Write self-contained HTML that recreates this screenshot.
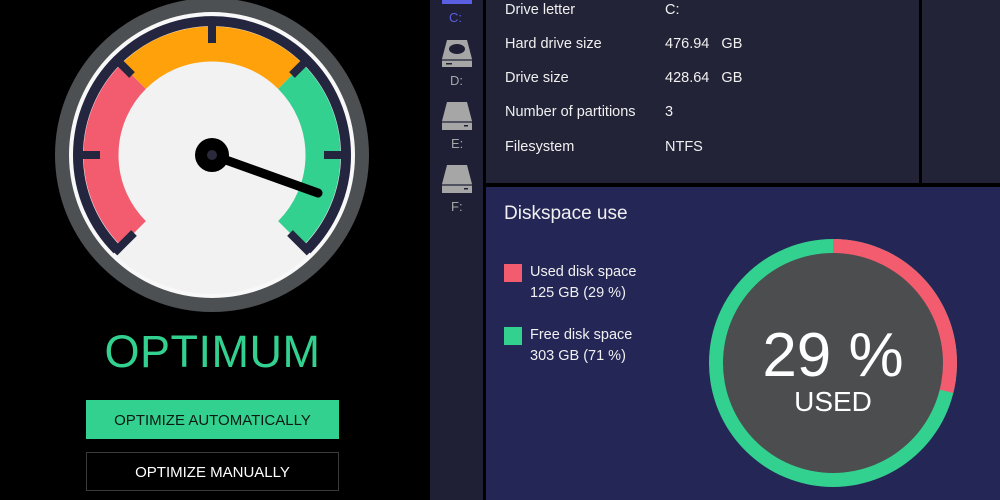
<!DOCTYPE html>
<html><head><meta charset="utf-8"><style>
*{margin:0;padding:0;box-sizing:border-box}
body{width:1000px;height:500px;overflow:hidden;background:#000;font-family:"Segoe UI","Liberation Sans",sans-serif;position:relative;color:#fff}
.a{position:absolute}
.lbl{font-size:14.5px;color:#f0f0f0}
</style></head><body>
<svg class="a" style="left:0;top:0" width="430" height="320" viewBox="0 0 430 320">
<circle cx="212" cy="155" r="157" fill="#4d5052"/>
<circle cx="212" cy="155" r="143" fill="#f8f8f8"/>
<circle cx="212" cy="155" r="139" fill="#f2f2f2"/>
<g transform="translate(212,155)">
<path d="M -94.8 94.8 A 134 134 0 1 1 94.8 94.8" fill="none" stroke="#24253f" stroke-width="10"/>
<path d="M -78.5 78.5 A 111 111 0 0 1 -78.5 -78.5" fill="none" stroke="#f25c6e" stroke-width="35"/>
<path d="M -78.5 -78.5 A 111 111 0 0 1 78.5 -78.5" fill="none" stroke="#ffa10a" stroke-width="35"/>
<path d="M 78.5 -78.5 A 111 111 0 0 1 78.5 78.5" fill="none" stroke="#33d18f" stroke-width="35"/>
<g stroke="#24253f" stroke-width="8">
<line x1="0" y1="-138" x2="0" y2="-112"/>
<line x1="-138" y1="0" x2="-112" y2="0"/>
<line x1="138" y1="0" x2="112" y2="0"/>
<line x1="-97.6" y1="-97.6" x2="-80" y2="-80"/>
<line x1="97.6" y1="-97.6" x2="80" y2="-80"/>
<line x1="-97.6" y1="97.6" x2="-78" y2="78"/>
<line x1="97.6" y1="97.6" x2="78" y2="78"/>
</g>
<line x1="0" y1="0" x2="106" y2="38" stroke="#000" stroke-width="9" stroke-linecap="round"/>
<circle r="17" fill="#000"/>
<circle r="5" fill="#2a2a3a"/>
</g>
</svg>
<div class="a" style="left:0;width:425px;top:326px;text-align:center;font-size:45px;color:#33d18f;font-weight:300;letter-spacing:0.5px">OPTIMUM</div>
<div class="a" style="left:86px;top:400px;width:253px;height:39px;background:#33d18f;color:#0c1a14;font-size:15px;text-align:center;line-height:41px">OPTIMIZE AUTOMATICALLY</div>
<div class="a" style="left:86px;top:452px;width:253px;height:39px;border:1px solid #3a3a3a;color:#fff;font-size:15px;text-align:center;line-height:40px">OPTIMIZE MANUALLY</div>

<div class="a" style="left:430px;top:0;width:53px;height:500px;background:#1f2035"></div>
<div class="a" style="left:442px;top:0;width:30px;height:4px;background:#5a5ee0"></div>
<div class="a lbl" style="left:449px;top:10px;color:#5a5ee0;font-size:13px">C:</div>
<svg class="a" style="left:442px;top:40px" width="30" height="160" viewBox="0 0 30 160">
<g fill="#a6a6a6">
<path d="M5 0 H25 L30 19 V27 H0 V19 Z"/>
<path d="M5 62 H25 L30 81 V90 H0 V81 Z"/>
<path d="M5 125 H25 L30 144 V153 H0 V144 Z"/>
</g>
<ellipse cx="15" cy="9" rx="8" ry="5" fill="#1f2035"/>
<g stroke="#1f2035" stroke-width="1.3"><line x1="0" y1="20" x2="30" y2="20"/><line x1="0" y1="82" x2="30" y2="82"/><line x1="0" y1="145" x2="30" y2="145"/></g>
<g fill="#1f2035"><rect x="4" y="23" width="6" height="1.5"/><rect x="22" y="85" width="4" height="1.5"/><rect x="22" y="148" width="4" height="1.5"/></g>
</svg>
<div class="a lbl" style="left:450px;top:73px;color:#a6a6a6;font-size:13px">D:</div>
<div class="a lbl" style="left:451px;top:136px;color:#a6a6a6;font-size:13px">E:</div>
<div class="a lbl" style="left:451px;top:199px;color:#a6a6a6;font-size:13px">F:</div>

<div class="a" style="left:486px;top:0;width:433px;height:183px;background:#222337"></div>
<div class="a" style="left:922px;top:0;width:78px;height:183px;background:#222337"></div>
<div class="a lbl" style="left:505px;top:2px">Drive letter</div>
<div class="a lbl" style="left:665px;top:2px">C:</div>
<div class="a lbl" style="left:505px;top:36px">Hard drive size</div>
<div class="a lbl" style="left:665px;top:36px">476.94&nbsp;&nbsp;&nbsp;GB</div>
<div class="a lbl" style="left:505px;top:70px">Drive size</div>
<div class="a lbl" style="left:665px;top:70px">428.64&nbsp;&nbsp;&nbsp;GB</div>
<div class="a lbl" style="left:505px;top:104px">Number of partitions</div>
<div class="a lbl" style="left:665px;top:104px">3</div>
<div class="a lbl" style="left:505px;top:139px">Filesystem</div>
<div class="a lbl" style="left:665px;top:139px">NTFS</div>

<div class="a" style="left:486px;top:187px;width:514px;height:313px;background:#242656"></div>
<div class="a" style="left:504px;top:203px;font-size:19px;color:#f0f0f0">Diskspace use</div>
<div class="a" style="left:504px;top:264px;width:18px;height:18px;background:#f25c6e"></div>
<div class="a lbl" style="left:530px;top:262px;line-height:21px">Used disk space<br>125 GB (29 %)</div>
<div class="a" style="left:504px;top:327px;width:18px;height:18px;background:#33d18f"></div>
<div class="a lbl" style="left:530px;top:325px;line-height:21px">Free disk space<br>303 GB (71 %)</div>
<svg class="a" style="left:700px;top:230px" width="266" height="266" viewBox="-133 -133 266 266">
<circle r="124" fill="#33d18f"/>
<path d="M0 0 L0 -124 A124 124 0 0 1 120.3 30 Z" fill="#f25c6e"/>
<circle r="110" fill="#4b4d4f"/>
</svg>
<div class="a" style="left:733px;top:320px;width:200px;text-align:center;font-size:62px;font-weight:300;line-height:72px">29 %</div>
<div class="a" style="left:733px;top:386px;width:200px;text-align:center;font-size:28px;line-height:32px">USED</div>
</body></html>
